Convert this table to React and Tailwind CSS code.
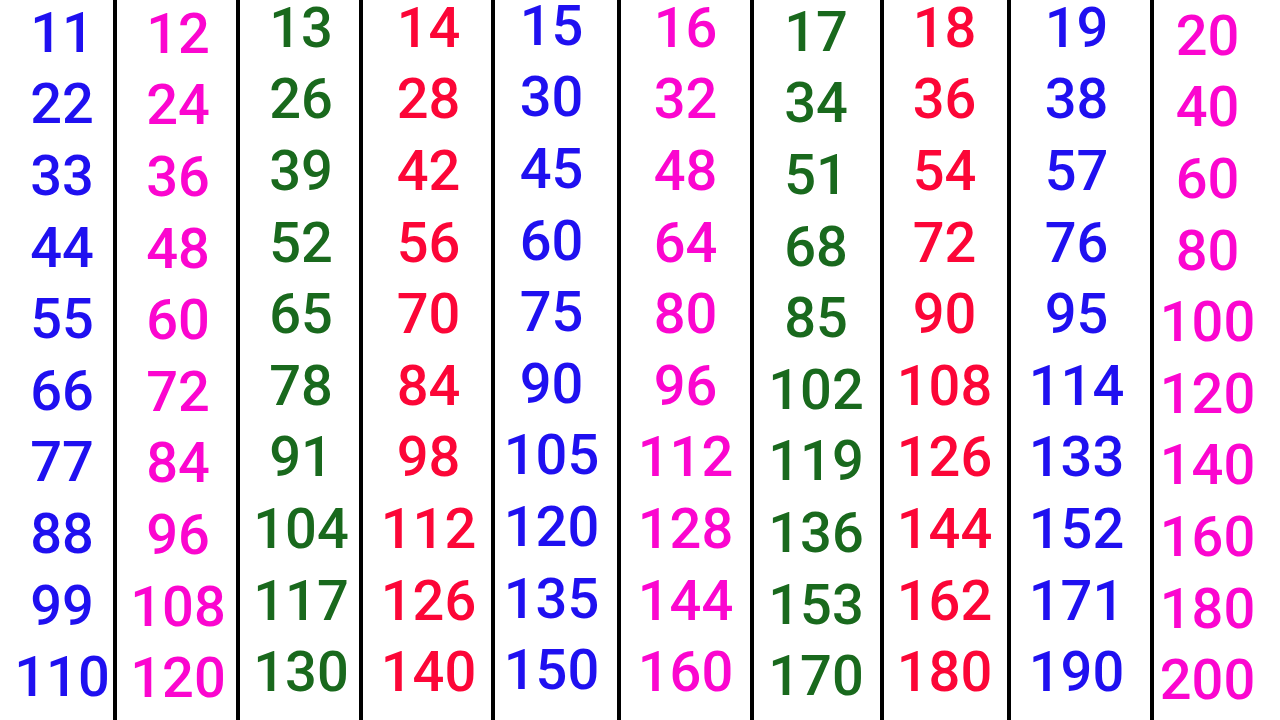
import React from "react";

// one entry per table column: width, colour, vertical nudge, horizontal nudge
const columns = [
  { n: 11, w: "w-[117px]", color: "text-[#1f10f0]", nudge: "-mt-[3px] pl-[11px]", border: true },
  { n: 12, w: "w-[123px]", color: "text-[#fb06cf]", nudge: "-mt-[2px] pl-[3px]", border: true },
  { n: 13, w: "w-[123px]", color: "text-[#19691d]", nudge: "-mt-[8px] pl-[3px]", border: true },
  { n: 14, w: "w-[132px]", color: "text-[#fc0637]", nudge: "-mt-[8px] pl-[3px]", border: true },
  { n: 15, w: "w-[126px]", color: "text-[#1f10f0]", nudge: "-mt-[10px] pr-[9px]", border: true },
  { n: 16, w: "w-[133px]", color: "text-[#fb06cf]", nudge: "-mt-[8px]", border: true },
  { n: 17, w: "w-[130px]", color: "text-[#19691d]", nudge: "-mt-[4px] pr-[2px]", border: true },
  { n: 18, w: "w-[127px]", color: "text-[#fc0637]", nudge: "-mt-[8px] pr-[2px]", border: true },
  { n: 19, w: "w-[143px]", color: "text-[#1f10f0]", nudge: "-mt-[8px] pr-[8px]", border: true },
  { n: 20, w: "flex-1", color: "text-[#fb06cf]", nudge: "mt-0 pr-[19px]", border: false },
];

const steps = [1, 2, 3, 4, 5, 6, 7, 8, 9, 10];

const App = () => {
  return (
    <div className="w-[1280px] h-[720px] bg-white flex overflow-hidden font-['Roboto',_'Liberation_Sans',_sans-serif]">
      {columns.map((col) => (
        <div
          key={col.n}
          className={`${col.w} h-full shrink-0 ${col.border ? "border-r-4 border-black" : ""}`}
        >
          <div className={`flex flex-col ${col.nudge}`}>
            {steps.map((k) => (
              <div
                key={k}
                className="h-[71.6px] flex items-center justify-center"
              >
                <span className={`leading-[44px] text-[56px] font-medium ${col.color}`}>
                  {col.n * k}
                </span>
              </div>
            ))}
          </div>
        </div>
      ))}
    </div>
  );
};

export default App;
